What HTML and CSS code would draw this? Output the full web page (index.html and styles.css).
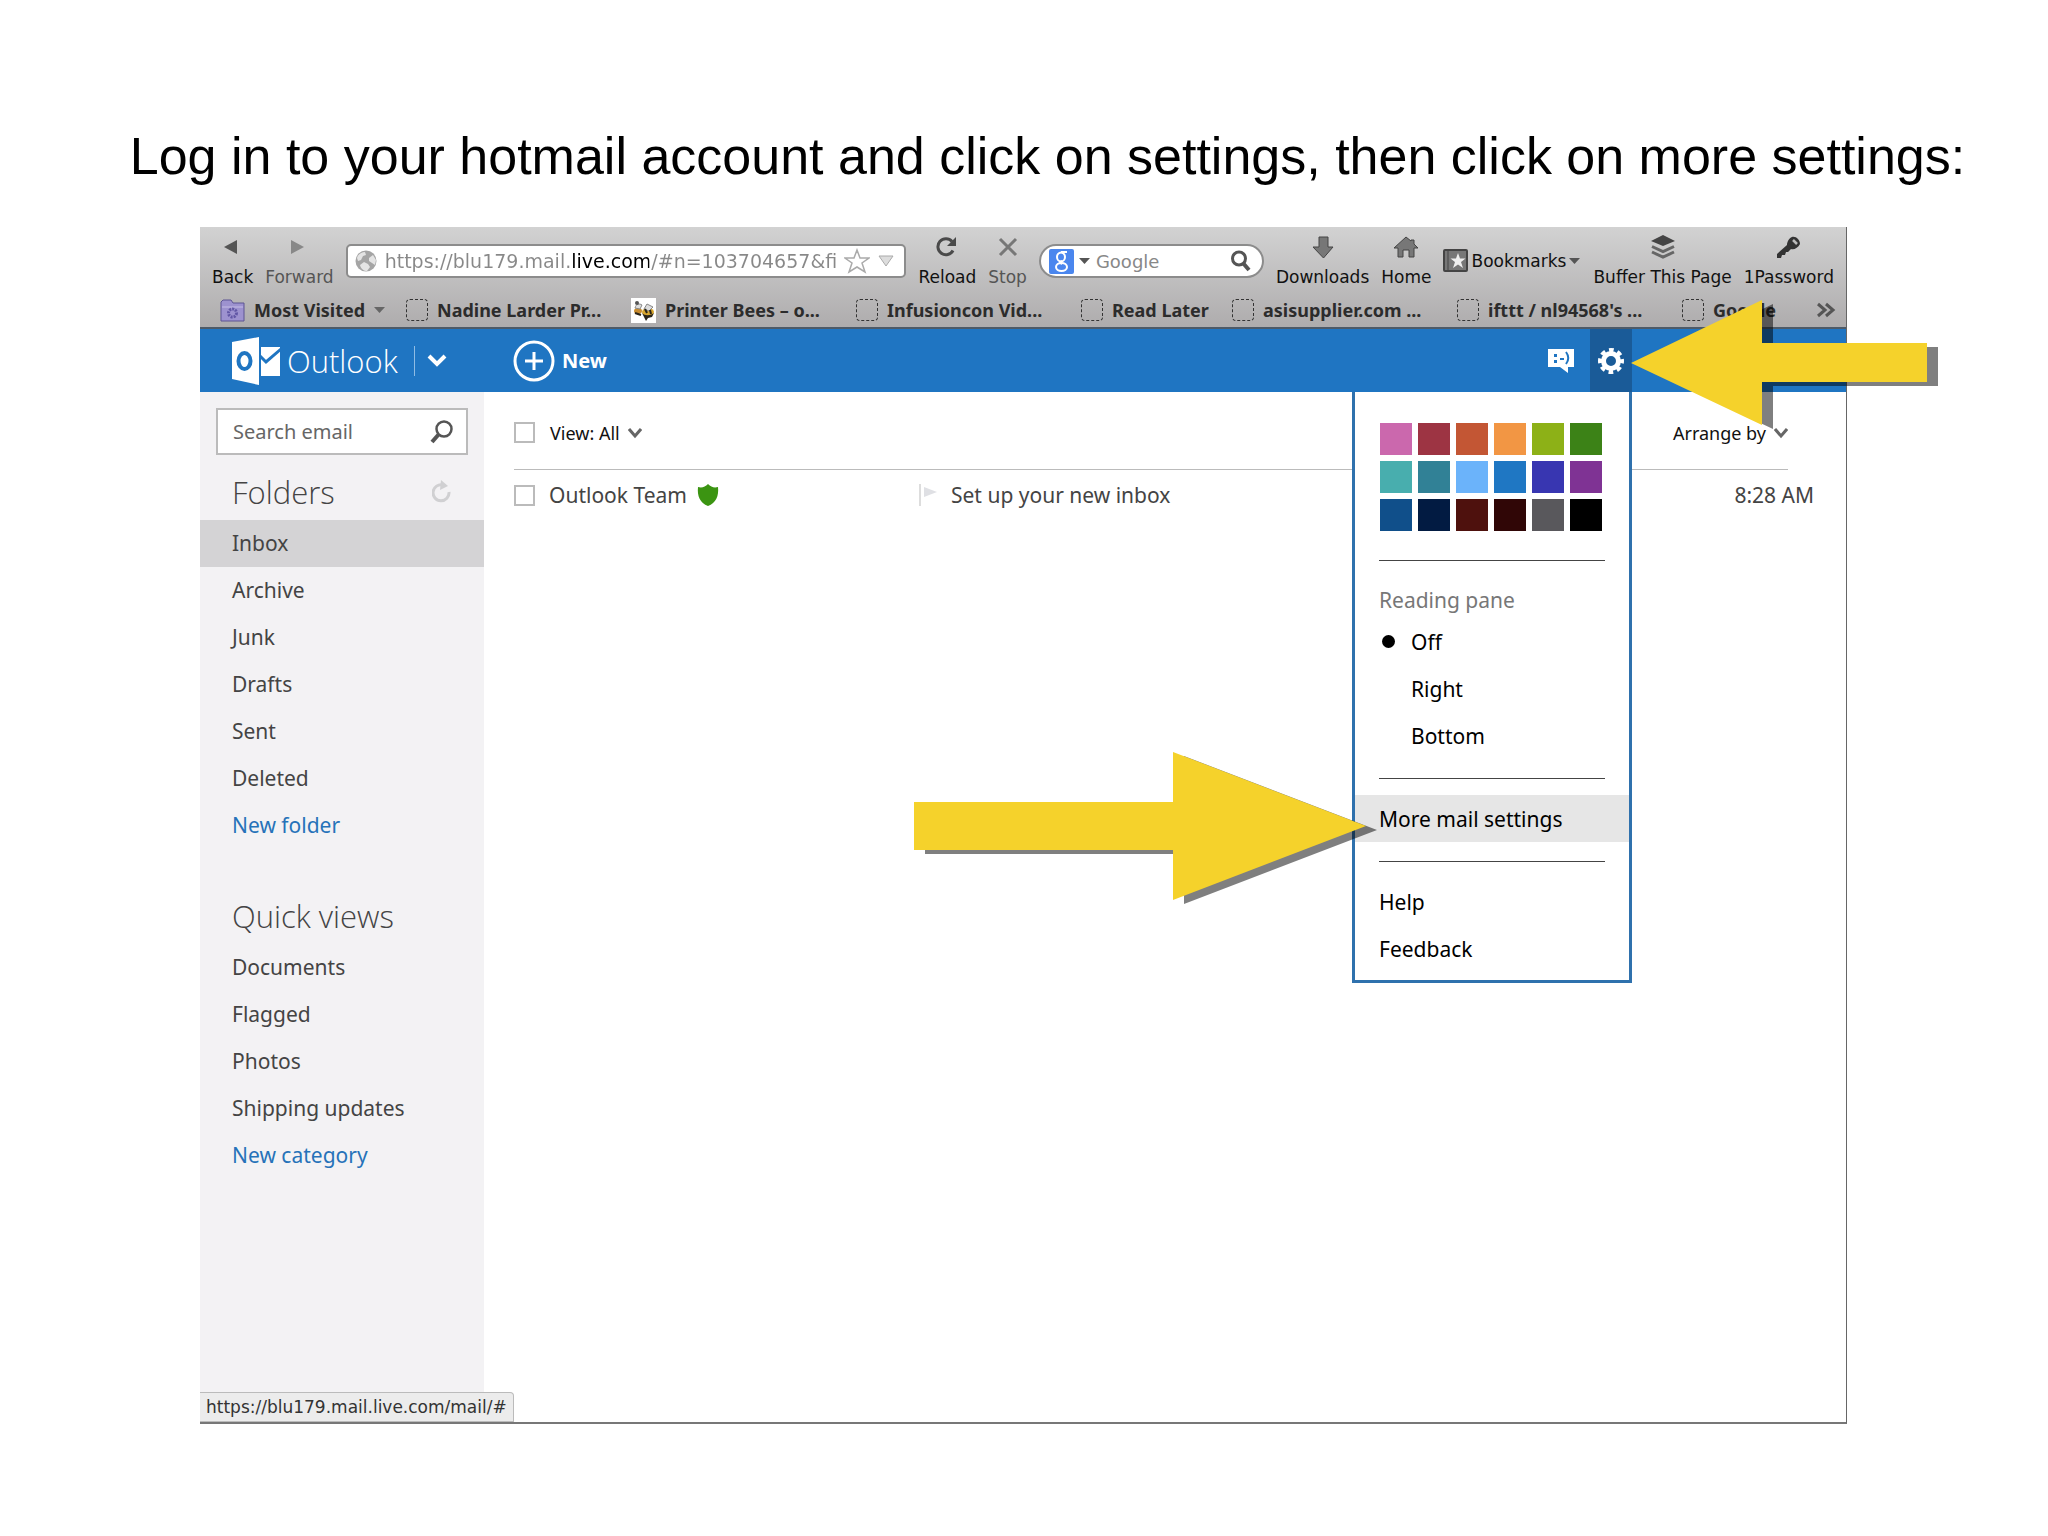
FILE: index.html
```html
<!DOCTYPE html>
<html lang="en">
<head>
    <meta charset="UTF-8">
    <meta name="viewport" content="width=device-width, initial-scale=1.0">
    <title>Hotmail settings</title>
    <link rel="stylesheet" href="styles.css">
</head>
<body>
    <h1>Log in to your hotmail account and click on settings, then click on more settings:</h1>
    <div class="browser">
        <div class="chrome">
            <div class="toolbar">
                <button class="tool">
                    <svg width="26" height="24" viewBox="0 0 26 24"><path d="M4 12 17 5v14z" fill="#555"/></svg>
                    Back
                </button>
                <button class="tool disabled">
                    <svg width="26" height="24" viewBox="0 0 26 24"><path d="M18 12 5 5v14z" fill="#888"/></svg>
                    Forward
                </button>
                <div class="address">
                    <svg width="22" height="22" viewBox="0 0 22 22"><circle cx="11" cy="11" r="10.5" fill="#a5a5a5"/><path d="M2 8c1-4 5-6 8-6l1 3-3 1-2 4-3 1zM14 8l4-3 3 5-1 5-3-2-3-2zM5 15l4-3 4 2 2 3-3 4c-3 0-6-2-7-6z" fill="#e4e4e4"/></svg>
                    <input type="text" class="url" aria-label="Address" value="https://blu179.mail.live.com/#n=103704657&amp;fid=1">
                    <svg width="26" height="26" viewBox="0 0 26 26"><path d="m13 2 3 8h9l-7 5 3 9-8-5-8 5 3-9-7-5h9z" fill="#fff" stroke="#aaa" stroke-width="1.5"/></svg>
                    <svg width="16" height="14" viewBox="0 0 16 14"><path d="M1 2h14L8 12z" fill="#ddd" stroke="#aaa"/></svg>
                </div>
                <button class="tool">
                    <svg width="26" height="24" viewBox="0 0 26 24"><path d="M19 15.500a8 8 0 1 1-1-9" fill="none" stroke="#4a4a4a" stroke-width="3"/><path d="M22 2v9h-9z" fill="#4a4a4a"/></svg>
                    Reload
                </button>
                <button class="tool disabled">
                    <svg width="26" height="24" viewBox="0 0 26 24"><path d="m5 4 16 16M21 4 5 20" stroke="#777" stroke-width="3"/></svg>
                    Stop
                </button>
                <div class="web-search">
                    <svg width="25" height="25" viewBox="0 0 25 25"><rect width="25" height="25" rx="2" fill="#4a86ee"/><g fill="none" stroke="#fff" stroke-width="2"><ellipse cx="12" cy="8" rx="4" ry="4.500"/><ellipse cx="12.500" cy="18" rx="5.500" ry="4"/><path d="M13 12c-3 1-2 2 0 3M12 3h6"/></g></svg>
                    <svg width="12" height="8" viewBox="0 0 12 8"><path d="M0 1h11L5.500 7z" fill="#555"/></svg>
                    <input type="text" aria-label="Web search" placeholder="Google">
                    <svg width="22" height="22" viewBox="0 0 22 22"><circle cx="9" cy="8.500" r="6.500" fill="none" stroke="#555" stroke-width="3"/><path d="m13 13 6 7" stroke="#555" stroke-width="4"/></svg>
                </div>
                <button class="tool">
                    <svg width="26" height="24" viewBox="0 0 26 24"><path d="M9 2h9v10h5l-9.500 11L3 12h6z" fill="#777" stroke="#444"/></svg>
                    Downloads
                </button>
                <button class="tool">
                    <svg width="26" height="24" viewBox="0 0 26 24"><path d="M13 2 1 13h4v9h5v-7h6v7h5v-9h4l-4-4V5h-3v1z" fill="#777" stroke="#444"/></svg>
                    Home
                </button>
                <button class="bookmarks">
                    <svg width="25" height="24" viewBox="0 0 25 24"><rect x="1" y="1" width="23" height="21" rx="1" fill="#777" stroke="#444" stroke-width="2"/><path d="M5 1v21" stroke="#444"/><path d="m15 4 2 5.500h5.500L18 13l2 6-5-3.500-5 3.500 2-6-4.500-3.500H13z" fill="#eee"/></svg>
                    Bookmarks
                    <svg width="12" height="8" viewBox="0 0 12 8"><path d="M0 1h11L5.500 7z" fill="#555"/></svg>
                </button>
                <button class="tool">
                    <svg width="26" height="24" viewBox="0 0 26 24"><path d="m13 0 12 6-12 5L1 6z" fill="#444"/><path d="m2 11.500 11 5 11-5M2 17l11 5 11-5" fill="none" stroke="#666" stroke-width="3"/></svg>
                    Buffer This Page
                </button>
                <button class="tool">
                    <svg width="26" height="24" viewBox="0 0 26 24"><path d="M16 2c4-1 8 3 8 7-2 4-6 6-9 5l-3 3-2 0-1 3-3 0-1 3H1v-4L11 10c0-3 2-7 5-8z" fill="#333"/><path d="m17 5 4 4" stroke="#bbb" stroke-width="2.500"/></svg>
                    1Password
                </button>
            </div>
            <nav class="bookmark-bar">
                <a href="#" class="bookmark folder">
                    <svg width="25" height="23" viewBox="0 0 25 23"><path d="M1 22V3l2-2h8l2 3h11v18z" fill="#9d92cf" stroke="#5d5593"/><path d="M2 8h21" stroke="#c5bde6"/><circle cx="12.500" cy="14" r="4" fill="none" stroke="#6257a5" stroke-width="3" stroke-dasharray="2 1"/></svg>
                    <span>Most Visited</span>
                    <svg width="12" height="8" viewBox="0 0 12 8"><path d="M0 1h11L5.500 7z" fill="#666"/></svg>
                </a>
                <a href="#" class="bookmark"><i class="blank"></i><span>Nadine Larder Pr...</span></a>
                <a href="#" class="bookmark">
                    <svg width="25" height="25" viewBox="0 0 25 25"><rect width="25" height="25" fill="#fff"/><ellipse cx="7" cy="13" rx="4" ry="3" fill="#c78b2f"/><ellipse cx="17" cy="14" rx="6" ry="4" fill="#d8a62d"/><path d="M11 15c3 3 8 3 12 0l-2 4-4 1-2 3-2-4z" fill="#2a2418"/><path d="M4 10c1-4 4-5 7-3l-2 4zM13 11l3-5 6 3-4 4z" fill="#ddd" stroke="#888"/><circle cx="6" cy="5" r="2" fill="#555"/><path d="m4 15 6 2M14 11l2 4M19 12l1 4" stroke="#2a2418" stroke-width="2"/></svg>
                    <span>Printer Bees – o...</span>
                </a>
                <a href="#" class="bookmark"><i class="blank"></i><span>Infusioncon Vid...</span></a>
                <a href="#" class="bookmark short"><i class="blank"></i><span>Read Later</span></a>
                <a href="#" class="bookmark"><i class="blank"></i><span>asisupplier.com ...</span></a>
                <a href="#" class="bookmark"><i class="blank"></i><span>ifttt / nl94568's ...</span></a>
                <a href="#" class="bookmark last"><i class="blank"></i><span>Google</span></a>
                <button class="more" aria-label="More bookmarks">
                    <svg width="20" height="16" viewBox="0 0 20 16"><path d="m2 2 7 6-7 6M10 2l7 6-7 6" fill="none" stroke="#555" stroke-width="3"/></svg>
                </button>
            </nav>
        </div>

        <header class="header">
            <a href="#" class="logo">
                <svg width="48" height="48" viewBox="0 0 48 48"><path d="M0 5 27 0v48L0 42z" fill="#fff"/><ellipse cx="12.500" cy="24" rx="6" ry="8" fill="none" stroke="#1f75c2" stroke-width="4"/><path d="M29 10h19v29H29z" fill="#fff"/><path d="m28 19 6 6 15-13" fill="none" stroke="#1f75c2" stroke-width="3"/></svg>
                Outlook
            </a>
            <button class="switcher" aria-label="Switch service">
                <svg width="20" height="14" viewBox="0 0 20 14"><path d="m2 2 8 8 8-8" fill="none" stroke="#fff" stroke-width="4"/></svg>
            </button>
            <button class="new">
                <svg width="42" height="42" viewBox="0 0 42 42"><circle cx="21" cy="21" r="19" fill="none" stroke="#fff" stroke-width="3"/><path d="M21 12v18M12 21h18" stroke="#fff" stroke-width="3"/></svg>
                New
            </button>
            <div class="header-tools">
                <button class="chat" aria-label="Messaging">
                    <svg width="26" height="24" viewBox="0 0 26 24"><path d="M0 0h26v18h-6v6l-8-6H0z" fill="#fff"/><path d="M6 5h3v3H6zM6 11h3v3H6zM12 9h4v2h-4z" fill="#1f75c2"/><path d="M18 3c3 4 3 8 0 12" fill="none" stroke="#1f75c2" stroke-width="2"/></svg>
                </button>
                <div class="settings">
                    <button class="gear" aria-label="Settings">
                        <svg width="26" height="26" viewBox="-13 -13 26 26"><circle r="7.500" fill="none" stroke="#fff" stroke-width="5"/><circle r="11" fill="none" stroke="#fff" stroke-width="4" stroke-dasharray="4.640 4" stroke-dashoffset="2.320"/></svg>
                    </button>
                    <div class="menu">
                        <div class="swatches"></div>
                        <hr>
                        <fieldset class="reading-pane">
                            <legend>Reading pane</legend>
                            <label><input type="radio" name="pane" checked>Off</label>
                            <label><input type="radio" name="pane">Right</label>
                            <label><input type="radio" name="pane">Bottom</label>
                        </fieldset>
                        <hr>
                        <a href="#" class="active">More mail settings</a>
                        <hr>
                        <a href="#">Help</a>
                        <a href="#">Feedback</a>
                    </div>
                </div>
            </div>
        </header>

        <div class="content">
            <aside class="sidebar">
                <div class="search">
                    <input type="text" aria-label="Search email" placeholder="Search email">
                    <svg width="24" height="24" viewBox="0 0 24 24"><circle cx="14" cy="9" r="7.500" fill="none" stroke="#555" stroke-width="2.500"/><path d="m9 14-7 8" stroke="#555" stroke-width="4"/></svg>
                </div>
                <h2>Folders
                    <svg width="20" height="24" viewBox="0 0 20 24"><path d="M17 12a8 8 0 1 1-6-7" fill="none" stroke="#d0d0d2" stroke-width="3"/><path d="M9 0l7 6-8 4z" fill="#d0d0d2"/></svg>
                </h2>
                <ul>
                    <li class="selected"><a href="#">Inbox</a></li>
                    <li><a href="#">Archive</a></li>
                    <li><a href="#">Junk</a></li>
                    <li><a href="#">Drafts</a></li>
                    <li><a href="#">Sent</a></li>
                    <li><a href="#">Deleted</a></li>
                    <li><a href="#" class="add">New folder</a></li>
                </ul>
                <h2 class="quick">Quick views</h2>
                <ul>
                    <li><a href="#">Documents</a></li>
                    <li><a href="#">Flagged</a></li>
                    <li><a href="#">Photos</a></li>
                    <li><a href="#">Shipping updates</a></li>
                    <li><a href="#" class="add">New category</a></li>
                </ul>
            </aside>
            <main>
                <div class="list-head">
                    <input type="checkbox" aria-label="Select all">
                    <button>View: All
                        <svg width="14" height="12" viewBox="0 0 14 12"><path d="m1 2 6 7 6-7" fill="none" stroke="#666" stroke-width="3"/></svg>
                    </button>
                    <button class="arrange">Arrange by
                        <svg width="14" height="12" viewBox="0 0 14 12"><path d="m1 2 6 7 6-7" fill="none" stroke="#666" stroke-width="3"/></svg>
                    </button>
                </div>
                <div class="message">
                    <input type="checkbox" id="msg">
                    <label class="sender" for="msg">Outlook Team
                        <svg width="22" height="22" viewBox="0 0 22 22"><path d="M1 3c4 1 7 0 10-3 3 3 6 4 10 3 1 9-2 16-10 19C3 19 0 12 1 3z" fill="#3b9412"/></svg>
                    </label>
                    <svg class="flag" width="20" height="22" viewBox="0 0 20 22"><path d="M1 0v22" stroke="#ddd" stroke-width="2"/><path d="m5 3 13 5-13 5z" fill="#dfe0e4"/></svg>
                    <a href="#" class="subject">Set up your new inbox</a>
                    <time>8:28 AM</time>
                </div>
            </main>
        </div>
        <div class="status">https://blu179.mail.live.com/mail/#</div>

        <svg class="arrow arrow-gear" width="308" height="130" viewBox="0 0 308 130">
            <path d="M0 63 131 0v43h165v39H131v43z" transform="translate(11 4)" fill="#000" fill-opacity=".5"/>
            <path d="M0 63 131 0v43h165v39H131v43z" fill="#f5d22b"/>
        </svg>
        <svg class="arrow arrow-more" width="464" height="154" viewBox="0 0 464 154">
            <path d="M0 50h259V0l193 74-193 74V98H0z" transform="translate(11 4)" fill="#000" fill-opacity=".5"/>
            <path d="M0 50h259V0l193 74-193 74V98H0z" fill="#f5d22b"/>
        </svg>
    </div>
    <script>
        const colors = [
            '#cb68ad', '#9d3443', '#c35634', '#f29644', '#8db117', '#3c8217',
            '#48aeae', '#318196', '#6bb3fa', '#1f77c3', '#3836b1', '#7f3394',
            '#104f8a', '#021b42', '#4e110d', '#300606', '#59585c', '#000000'
        ];
        const swatches = document.querySelector('.swatches');
        colors.forEach(color => {
            const button = document.createElement('button');
            button.style.backgroundColor = color;
            button.setAttribute('aria-label', color);
            swatches.appendChild(button);
        });
    </script>
</body>
</html>
```

FILE: styles.css
```css
* {
    box-sizing: border-box;
}

body {
    margin: 0;
    padding: 120px 201px 112px 200px;
    background-color: #fff;
    color: #444;
    font-family: "Noto Sans", sans-serif;
    font-size: 21px;
}

h1 {
    margin: 0 -124px 35px -76px;
    color: #000;
    font: 52px/72px "Liberation Sans", Arial, sans-serif;
    text-align: center;
    white-space: nowrap;
}

a {
    color: inherit;
    text-decoration: none;
}

button {
    display: flex;
    align-items: center;
    padding: 0;
    border: none;
    background: none;
    color: inherit;
    font: inherit;
    white-space: nowrap;
    cursor: pointer;
}

input {
    margin: 0;
    padding: 0;
    border: none;
    outline: none;
    background: none;
    font: inherit;
}

svg {
    flex-shrink: 0;
}

.browser {
    position: relative;
    border-right: 1px solid #666;
    border-bottom: 2px solid #777;
}

/* browser toolbar */
.chrome {
    height: 102px;
    border-bottom: 2px solid #4d5a68;
    background: linear-gradient(#d2d2d2, #aeacad);
    color: #111;
    font-family: "DejaVu Sans", sans-serif;
    font-size: 17px;
}

.toolbar {
    display: flex;
    align-items: center;
    gap: 12px;
    height: 68px;
    padding: 0 12px;
}

.tool {
    flex-direction: column;
    gap: 8px;
    line-height: 20px;
}

.disabled {
    color: #555;
}

.address,
.web-search {
    display: flex;
    align-items: center;
    height: 34px;
    border: 2px solid #8c8c8c;
    border-radius: 5px;
    background-color: #fff;
}

.address {
    flex: 1;
    gap: 8px;
    padding: 0 10px 0 7px;
    font-size: 19px;
}

.address input,
.web-search input {
    flex: 1;
    width: 0;
}

/* grey address with the domain in black */
.address .url {
    background: linear-gradient(to right, #888 188px, #000 188px, #000 264px, #888 264px);
    background-clip: text;
    color: transparent;
}

.web-search {
    flex: 0 1 225px;
    gap: 5px;
    padding: 0 10px 0 8px;
    border-radius: 17px;
    font-size: 18px;
}

.web-search input::placeholder {
    color: #888;
}

.bookmarks {
    gap: 3px;
}

.bookmark-bar {
    display: flex;
    align-items: center;
    height: 30px;
    padding: 0 10px 0 20px;
    color: #2c2c2c;
    font-family: "Noto Sans", sans-serif;
    font-size: 18px;
    font-weight: bold;
}

.bookmark {
    display: flex;
    flex-shrink: 0;
    align-items: center;
    gap: 9px;
    width: 225px;
    white-space: nowrap;
}

.folder {
    width: 186px;
}

.short {
    width: 151px;
}

.last {
    width: auto;
}

.blank {
    width: 22px;
    height: 22px;
    border: 1px dashed #333;
    border-radius: 4px;
}

.more {
    margin-left: auto;
}

/* outlook header */
.header {
    display: flex;
    align-items: center;
    height: 63px;
    padding-left: 32px;
    background-color: #1f75c2;
    color: #fff;
}

.logo {
    display: flex;
    align-items: center;
    gap: 7px;
    width: 182px;
    font-family: "Open Sans", sans-serif;
    font-size: 31px;
    font-weight: 300;
}

.switcher {
    height: 30px;
    padding-left: 12px;
    border-left: 1px solid #8fbce4;
}

.new {
    gap: 7px;
    margin-left: 66px;
    font-size: 20px;
    font-weight: bold;
}

.header-tools {
    display: flex;
    align-items: center;
    gap: 16px;
    margin-left: auto;
    padding-right: 214px;
}

.settings {
    position: relative;
}

.gear {
    justify-content: center;
    width: 42px;
    height: 63px;
    background-color: #1a5b98;
}

.menu {
    position: absolute;
    top: 63px;
    right: 0;
    width: 280px;
    padding: 31px 0 8px;
    border: 3px solid #2f71ad;
    border-top: none;
    background-color: #fff;
    color: #000;
}

.swatches {
    display: grid;
    grid-template-columns: repeat(6, 32px);
    gap: 6px;
    padding: 0 25px;
}

.swatches button {
    height: 32px;
}

.menu hr {
    margin: 19px 24px 16px;
    border: none;
    border-top: 1px solid #444;
}

.menu .swatches + hr {
    margin: 29px 24px 21px;
}

.reading-pane {
    margin: 0;
    padding: 0;
    border: none;
}

.reading-pane legend {
    padding: 0 24px;
    color: #777;
    line-height: 36px;
}

.menu a,
.reading-pane label {
    display: flex;
    align-items: center;
    height: 47px;
    padding: 0 24px;
}

.reading-pane input {
    appearance: none;
    width: 13px;
    height: 13px;
    margin: 0 16px 0 3px;
    border-radius: 50%;
}

.reading-pane input:checked {
    background-color: #000;
}

.menu .active {
    background-color: #e6e6e6;
}

/* mail */
.content {
    display: flex;
    min-height: 1030px;
}

.sidebar {
    width: 284px;
    padding-top: 16px;
    background-color: #f3f2f4;
}

.search {
    display: flex;
    align-items: center;
    height: 47px;
    margin: 0 16px;
    padding: 0 12px 0 15px;
    border: 2px solid #bbb;
    background-color: #fff;
    font-size: 20px;
}

.search input {
    flex: 1;
    width: 0;
}

.search input::placeholder {
    color: #666;
}

.sidebar h2 {
    display: flex;
    align-items: center;
    justify-content: space-between;
    height: 65px;
    margin: 0;
    padding: 8px 32px 0;
    font-family: "Open Sans", sans-serif;
    font-size: 31px;
    font-weight: 300;
}

.sidebar .quick {
    height: 95px;
    padding-top: 38px;
}

.sidebar ul {
    margin: 0;
    padding: 0;
    list-style: none;
}

.sidebar li {
    padding: 0 32px;
    line-height: 47px;
}

.sidebar .selected {
    background-color: #d4d3d5;
}

.add {
    color: #2672b9;
}

main {
    flex: 1;
    padding-left: 30px;
}

main input {
    appearance: none;
    width: 21px;
    height: 21px;
    border: 2px solid #bbb;
}

.list-head {
    display: flex;
    align-items: center;
    gap: 15px;
    height: 78px;
    margin-right: 58px;
    padding-top: 4px;
    border-bottom: 1px solid #bbb;
    color: #111;
    font-size: 18px;
}

.list-head button {
    gap: 8px;
}

.list-head .arrange {
    margin-left: auto;
}

.message {
    display: flex;
    align-items: center;
    height: 50px;
    padding-right: 32px;
}

.sender {
    display: flex;
    align-items: center;
    gap: 10px;
    width: 370px;
    margin-left: 14px;
}

.flag {
    margin-right: 12px;
}

.message time {
    margin-left: auto;
}

.status {
    position: absolute;
    bottom: 0;
    left: 0;
    padding: 0 6px;
    border: 1px solid #bbb;
    border-left: none;
    border-radius: 0 4px 0 0;
    background-color: #ececec;
    color: #333;
    font: 17px/28px "DejaVu Sans", sans-serif;
}

/* pointer arrows */
.arrow {
    position: absolute;
    pointer-events: none;
}

.arrow-gear {
    top: 73px;
    right: -93px;
}

.arrow-more {
    top: 525px;
    right: 468px;
}
```
